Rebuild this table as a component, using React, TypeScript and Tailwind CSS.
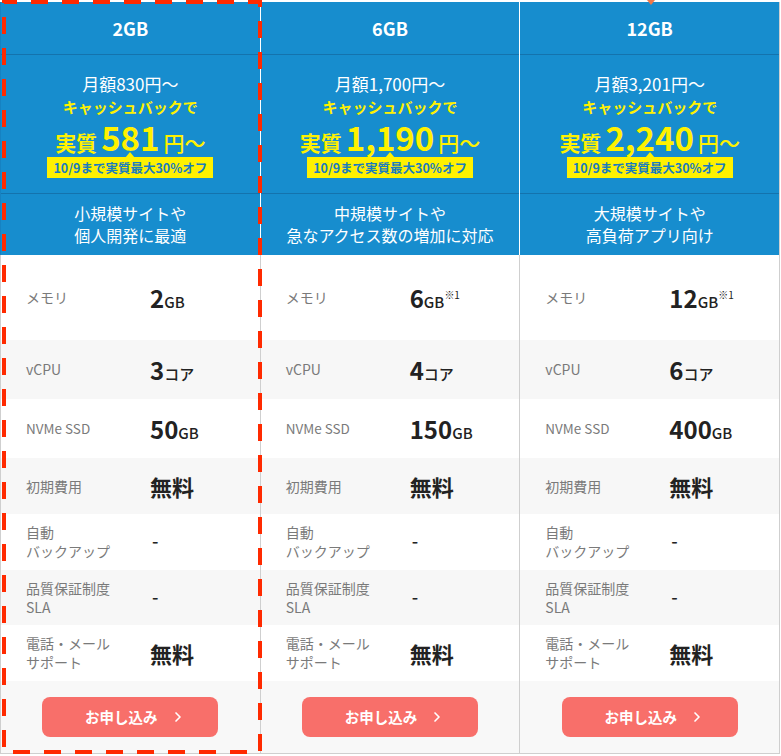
import { ChevronRight } from "lucide-react";

type Plan = {
  name: string;
  monthly: string;
  price: string;
  desc: string[];
  memory: string;
  memoryNote: boolean;
  cpu: string;
  ssd: string;
};

const PLANS: Plan[] = [
  {
    name: "2GB",
    monthly: "830",
    price: "581",
    desc: ["小規模サイトや", "個人開発に最適"],
    memory: "2",
    memoryNote: false,
    cpu: "3",
    ssd: "50",
  },
  {
    name: "6GB",
    monthly: "1,700",
    price: "1,190",
    desc: ["中規模サイトや", "急なアクセス数の増加に対応"],
    memory: "6",
    memoryNote: true,
    cpu: "4",
    ssd: "150",
  },
  {
    name: "12GB",
    monthly: "3,201",
    price: "2,240",
    desc: ["大規模サイトや", "高負荷アプリ向け"],
    memory: "12",
    memoryNote: true,
    cpu: "6",
    ssd: "400",
  },
];

function Row({
  label,
  bg,
  h,
  children,
}: {
  label: React.ReactNode;
  bg: string;
  h: string;
  children: React.ReactNode;
}) {
  return (
    <div className={`flex items-center ${bg} ${h}`}>
      <div className="w-[149px] shrink-0 pl-[25px] text-[14px] leading-[19px] text-[#7a7a7a]">
        {label}
      </div>
      <div className="flex items-baseline text-[#222]">{children}</div>
    </div>
  );
}

function Num({ n, unit, note }: { n: string; unit: string; note?: boolean }) {
  return (
    <>
      <span className="text-[24px] font-bold leading-none">{n}</span>
      <span className="text-[15px] font-medium leading-none">{unit}</span>
      {note ? (
        <span className="relative -top-[9px] text-[10px] leading-none">※1</span>
      ) : null}
    </>
  );
}

function Free() {
  return <span className="text-[22px] font-bold leading-none">無料</span>;
}

function Dash() {
  return <span className="relative -top-[2px] pl-[2px] text-[18px] font-medium leading-none">-</span>;
}

function PlanColumn({ plan, first }: { plan: Plan; first: boolean }) {
  const headBorder = first ? "border-l border-[#1682c2]" : "border-l border-white";
  return (
    <div className="flex flex-1 flex-col">
      <div className={`bg-[#178dce] ${headBorder}`}>
        <div className="flex h-[53px] items-center justify-center border-b border-[#1473ad] text-[18px] font-bold text-white">
          {plan.name}
        </div>
        <div className="flex h-[139px] flex-col items-center border-b border-[#1473ad] pt-[16px]">
          <div className="text-[17px] leading-[26px] text-white">
            月額{plan.monthly}円～
          </div>
          <div className="text-[15px] font-bold leading-[20px] text-[#fff100]">
            キャッシュバックで
          </div>
          <div className="mt-[3px] flex h-[34px] items-baseline text-[#fff100]">
            <span className="text-[21px] font-bold leading-[34px]">実質</span>
            <span className="mx-[4px] text-[33px] font-bold leading-[34px]">
              {plan.price}
            </span>
            <span className="text-[21px] font-medium leading-[34px]">円～</span>
          </div>
          <div className="relative mt-[3px]">
            <div className="absolute -top-[5px] left-1/2 h-0 w-0 -translate-x-1/2 border-x-[5px] border-b-[6px] border-x-transparent border-b-[#fff100]" />
            <div className="bg-[#fff100] px-[6px] text-[12.5px] font-bold leading-[21px] text-[#1a7cbf]">
              10/9まで実質最大30%オフ
            </div>
          </div>
        </div>
        <div className="flex h-[61px] flex-col items-center justify-center gap-[1px] text-center text-[16px] leading-[21px] text-white">
          {plan.desc.map((d) => (
            <div key={d}>{d}</div>
          ))}
        </div>
      </div>
      <div className="border-l border-[#cfcfcf]">
        <Row label="メモリ" bg="bg-white" h="h-[85px]">
          <Num n={plan.memory} unit="GB" note={plan.memoryNote} />
        </Row>
        <Row label="vCPU" bg="bg-[#f7f7f7]" h="h-[59px]">
          <Num n={plan.cpu} unit="コア" />
        </Row>
        <Row label={<span className="text-[13.5px]">NVMe SSD</span>} bg="bg-white" h="h-[59px]">
          <Num n={plan.ssd} unit="GB" />
        </Row>
        <Row label="初期費用" bg="bg-[#f7f7f7]" h="h-[56px]">
          <Free />
        </Row>
        <Row
          label={
            <>
              自動
              <br />
              バックアップ
            </>
          }
          bg="bg-white"
          h="h-[56px]"
        >
          <Dash />
        </Row>
        <Row
          label={
            <>
              品質保証制度
              <br />
              SLA
            </>
          }
          bg="bg-[#f7f7f7]"
          h="h-[55px]"
        >
          <Dash />
        </Row>
        <Row
          label={
            <>
              電話・メール
              <br />
              サポート
            </>
          }
          bg="bg-white"
          h="h-[56px]"
        >
          <Free />
        </Row>
        <div className="flex h-[72px] justify-center bg-[#f8f8f8] pt-[16px]">
          <button
            type="button"
            className="flex h-[40px] w-[176px] items-center justify-center gap-[12px] rounded-[8px] bg-[#f86f6a] pl-[10px] text-[14.5px] font-bold text-white"
          >
            お申し込み
            <ChevronRight className="h-[16px] w-[16px]" strokeWidth={2.5} />
          </button>
        </div>
      </div>
    </div>
  );
}

export default function App() {
  return (
    <div
      className="relative h-[756px] w-[781px] bg-white pt-[2px]"
      style={{ fontFamily: '"Noto Sans CJK JP", "Noto Sans", sans-serif' }}
    >
      <div className="flex w-[780px] border-r border-b border-[#cfcfcf]">
        {PLANS.map((p, i) => (
          <PlanColumn key={p.name} plan={p} first={i === 0} />
        ))}
      </div>
      <svg
        className="pointer-events-none absolute left-[2px] top-0"
        width="260"
        height="754"
        viewBox="0 0 260 754"
      >
        <rect
          x="2"
          y="2"
          width="256"
          height="750"
          fill="none"
          stroke="#ff2a00"
          strokeWidth="4"
          strokeDasharray="17 14"
          strokeDashoffset="4"
        />
      </svg>
      <svg
        className="absolute left-[646px] top-0"
        width="10"
        height="5"
        viewBox="0 0 10 5"
      >
        <path d="M1 0 H9 L5 5 Z" fill="#f0784a" />
      </svg>
    </div>
  );
}
